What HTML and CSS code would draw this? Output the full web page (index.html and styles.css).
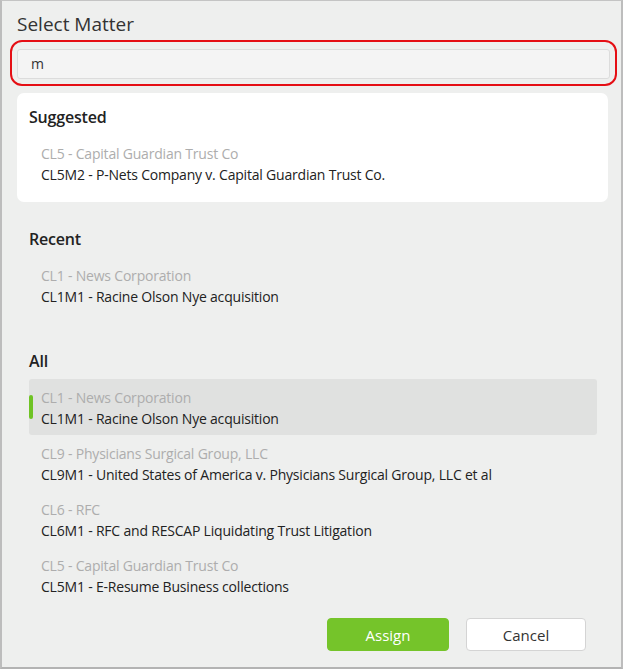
FILE: index.html
```html
<!DOCTYPE html>
<html lang="en">
<head>
  <meta charset="utf-8" />
  <title>Select Matter</title>
  <link rel="stylesheet" href="styles.css">
</head>
<body>
<div class="dialog">
  <div class="title">Select Matter</div>

  <div class="search-mark">
    <div class="search">m</div>
  </div>

  <div class="section card">
    <div class="section-head">Suggested</div>
    <div class="item">
      <div class="client">CL5 - Capital Guardian Trust Co</div>
      <div class="matter">CL5M2 - P-Nets Company v. Capital Guardian Trust Co.</div>
    </div>
  </div>

  <div class="section recent">
    <div class="section-head">Recent</div>
    <div class="item">
      <div class="client">CL1 - News Corporation</div>
      <div class="matter">CL1M1 - Racine Olson Nye acquisition</div>
    </div>
  </div>

  <div class="section all">
    <div class="section-head">All</div>
    <div class="item selected">
      <div class="client">CL1 - News Corporation</div>
      <div class="matter">CL1M1 - Racine Olson Nye acquisition</div>
    </div>
    <div class="item">
      <div class="client">CL9 - Physicians Surgical Group, LLC</div>
      <div class="matter">CL9M1 - United States of America v. Physicians Surgical Group, LLC et al</div>
    </div>
    <div class="item">
      <div class="client">CL6 - RFC</div>
      <div class="matter">CL6M1 - RFC and RESCAP Liquidating Trust Litigation</div>
    </div>
    <div class="item">
      <div class="client">CL5 - Capital Guardian Trust Co</div>
      <div class="matter">CL5M1 - E-Resume Business collections</div>
    </div>
  </div>

  <div class="footer">
    <button class="btn btn-primary">Assign</button>
    <button class="btn">Cancel</button>
  </div>
</div>
</body>
</html>
```

FILE: styles.css
```css
html,body{margin:0;height:100%;overflow:hidden;background:#fff;font-family:"Open Sans","Noto Sans",sans-serif;color:#222}
.dialog{box-sizing:border-box;width:623px;height:669px;background:#eeefee;
        border:1px solid #c4c4c4;border-left:2px solid #bdbdbd;border-right:2px solid #bdbdbd;border-bottom:2px solid #b3b3b3;
        padding:9px 13px 0 15px;display:flex;flex-direction:column}
.title{font-size:19px;line-height:28px;color:#333}

.search-mark{margin:2px -9px 0 -7px;border:2px solid #e50e14;border-radius:12px;padding:7px 5px 5px}
.search{box-sizing:border-box;height:30px;background:#f4f4f4;border:1px solid #dcdcdc;border-radius:3px;
        padding:0 13px;font-size:14px;line-height:28px;color:#333}

.section{padding:0 11px 0 12px}
.card{margin-top:7px;background:#fff;border-radius:7px;padding-top:12px;padding-bottom:11px}
.recent{margin-top:25px}
.all{margin-top:36px}
.section-head{font-size:16px;font-weight:600;line-height:24px;margin-bottom:6px;color:#222;letter-spacing:-0.2px}

.item{position:relative;padding:8px 12px 6px;font-size:14px;line-height:21px;letter-spacing:-0.2px;border-radius:3px;white-space:nowrap}
.client{color:#adadad}
.matter{color:#222}
.item.selected{background:#e0e1e0}
.item.selected::before{content:"";position:absolute;left:0;top:16px;width:4px;height:24px;border-radius:2px;background:#6fc324}

.footer{margin-top:15px;display:flex;justify-content:flex-end;gap:17px;padding-right:22px}
.btn{box-sizing:border-box;width:120px;height:33px;border:1px solid #d4d4d4;border-radius:4px;background:#fff;
     font-family:inherit;font-size:15px;color:#333;padding:0}
.btn-primary{width:122px;background:#75c42a;border-color:#75c42a;color:#fff}
```
